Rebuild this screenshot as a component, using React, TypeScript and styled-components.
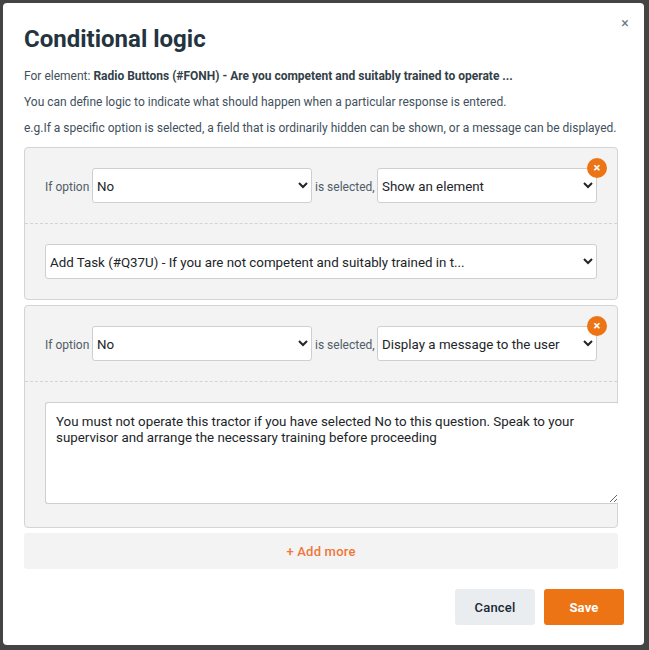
import styled, { createGlobalStyle } from 'styled-components'

const GlobalStyle = createGlobalStyle`
  html, body {
    margin: 0;
    height: 650px;
    overflow: hidden;
    background: #444444;
    font-family: Roboto, 'Liberation Sans', sans-serif;
  }
  * {
    box-sizing: border-box;
  }
`

const Backdrop = styled.div`
  width: 649px;
  height: 650px;
  padding: 3px 5px 5px 3px;
  background: #444444;
`

const Dialog = styled.div`
  position: relative;
  width: 641px;
  height: 642px;
  padding: 18px 20px 0 21px;
  background: #ffffff;
  border-radius: 4px;
  color: #42505c;
`

const Close = styled.button`
  position: absolute;
  top: 14px;
  right: 14px;
  width: 10px;
  height: 12px;
  padding: 0;
  border: 0;
  background: none;
  color: #6b7780;
  font: 14px/12px Roboto, sans-serif;
`

const Title = styled.h2`
  margin: 0 0 10px;
  font-size: 24px;
  line-height: 36px;
  font-weight: 700;
  color: #24343f;
`

const Line = styled.p`
  margin: 0 0 8px;
  font-size: 12px;
  line-height: 18px;
  white-space: nowrap;

  b {
    font-weight: 700;
    color: #333f48;
  }
`

const Rules = styled.div`
  display: flex;
  flex-direction: column;
  gap: 5px;
  width: 594px;
  margin-top: 10px;
`

const Rule = styled.section`
  position: relative;
  background: #f3f3f3;
  border: 1px solid #d4d4d4;
  border-radius: 4px;
`

const RuleRow = styled.div`
  display: flex;
  align-items: center;
  gap: 3px;
  height: 75px;
  padding: 0 20px;
`

const RowLabel = styled.span<{ $width: number }>`
  flex: none;
  width: ${(p) => p.$width}px;
  padding-top: 2px;
  font-size: 12px;
  white-space: nowrap;
  color: #4f5d68;
`

const RuleBody = styled.div<{ $height: number }>`
  height: ${(p) => p.$height}px;
  padding: 20px 20px 0;
  border-top: 1px dashed #d4d4d4;
`

const Select = styled.select<{ $width?: number }>`
  width: ${(p) => (p.$width ? `${p.$width}px` : '100%')};
  height: 35px;
  padding: 2px 0 0;
  background: #ffffff;
  border: 1px solid #cfcfcf;
  border-radius: 3px;
  color: #212529;
  font-family: Roboto, sans-serif;
  font-size: 13.333px;
`

const Message = styled.textarea`
  display: block;
  position: relative;
  width: 574px;
  height: 102px;
  padding: 11px 10px;
  background: #ffffff;
  border: 1px solid #cfcfcf;
  border-right-color: #ffffff;
  border-radius: 3px;
  color: #212529;
  font-family: Roboto, sans-serif;
  font-size: 13.333px;
  line-height: 16px;
`

const Remove = styled.button`
  position: absolute;
  z-index: 1;
  top: 10px;
  right: 10px;
  width: 20px;
  height: 20px;
  padding: 0;
  border: 0;
  border-radius: 50%;
  background: #ed7414;
  color: #ffffff;
  font: 700 13px/20px Roboto, sans-serif;
`

const AddMore = styled.button`
  display: block;
  width: 594px;
  height: 36px;
  margin-top: 5px;
  border: 0;
  border-radius: 3px;
  background: #f3f3f3;
  color: #f0773a;
  font-family: Roboto, sans-serif;
  font-size: 13px;
  font-weight: 500;
  letter-spacing: 0.2px;
`

const Footer = styled.div`
  display: flex;
  justify-content: flex-end;
  gap: 9px;
  margin-top: 20px;
`

const Action = styled.button<{ $primary?: boolean }>`
  width: 80px;
  height: 36px;
  border: 0;
  border-radius: 3px;
  background: ${(p) => (p.$primary ? '#ed7414' : '#e9edf0')};
  color: ${(p) => (p.$primary ? '#ffffff' : '#1c2733')};
  font-family: Roboto, sans-serif;
  font-size: 13px;
  font-weight: ${(p) => (p.$primary ? 700 : 500)};
  letter-spacing: 0.2px;
`

export default function App() {
  return (
    <Backdrop>
      <GlobalStyle />
      <Dialog>
        <Close>×</Close>
        <Title>Conditional logic</Title>
        <Line>
          For element: <b>Radio Buttons (#FONH) - Are you competent and suitably trained to operate ...</b>
        </Line>
        <Line>You can define logic to indicate what should happen when a particular response is entered.</Line>
        <Line>e.g.If a specific option is selected, a field that is ordinarily hidden can be shown, or a message can be displayed.</Line>
        <Rules>
          <Rule>
            <Remove>×</Remove>
            <RuleRow>
              <RowLabel $width={44}>If option</RowLabel>
              <Select $width={220} defaultValue="No">
                <option>No</option>
              </Select>
              <RowLabel $width={59}>is selected,</RowLabel>
              <Select $width={220} defaultValue="Show an element">
                <option>Show an element</option>
              </Select>
            </RuleRow>
            <RuleBody $height={76}>
              <Select defaultValue="task">
                <option value="task">Add Task (#Q37U) - If you are not competent and suitably trained in t...</option>
              </Select>
            </RuleBody>
          </Rule>
          <Rule>
            <Remove>×</Remove>
            <RuleRow>
              <RowLabel $width={44}>If option</RowLabel>
              <Select $width={220} defaultValue="No">
                <option>No</option>
              </Select>
              <RowLabel $width={59}>is selected,</RowLabel>
              <Select $width={220} defaultValue="Display a message to the user">
                <option>Display a message to the user</option>
              </Select>
            </RuleRow>
            <RuleBody $height={146}>
              <Message
                defaultValue="You must not operate this tractor if you have selected No to this question. Speak to your supervisor and arrange the necessary training before proceeding"
              />
            </RuleBody>
          </Rule>
        </Rules>
        <AddMore>+ Add more</AddMore>
        <Footer>
          <Action>Cancel</Action>
          <Action $primary>Save</Action>
        </Footer>
      </Dialog>
    </Backdrop>
  )
}
